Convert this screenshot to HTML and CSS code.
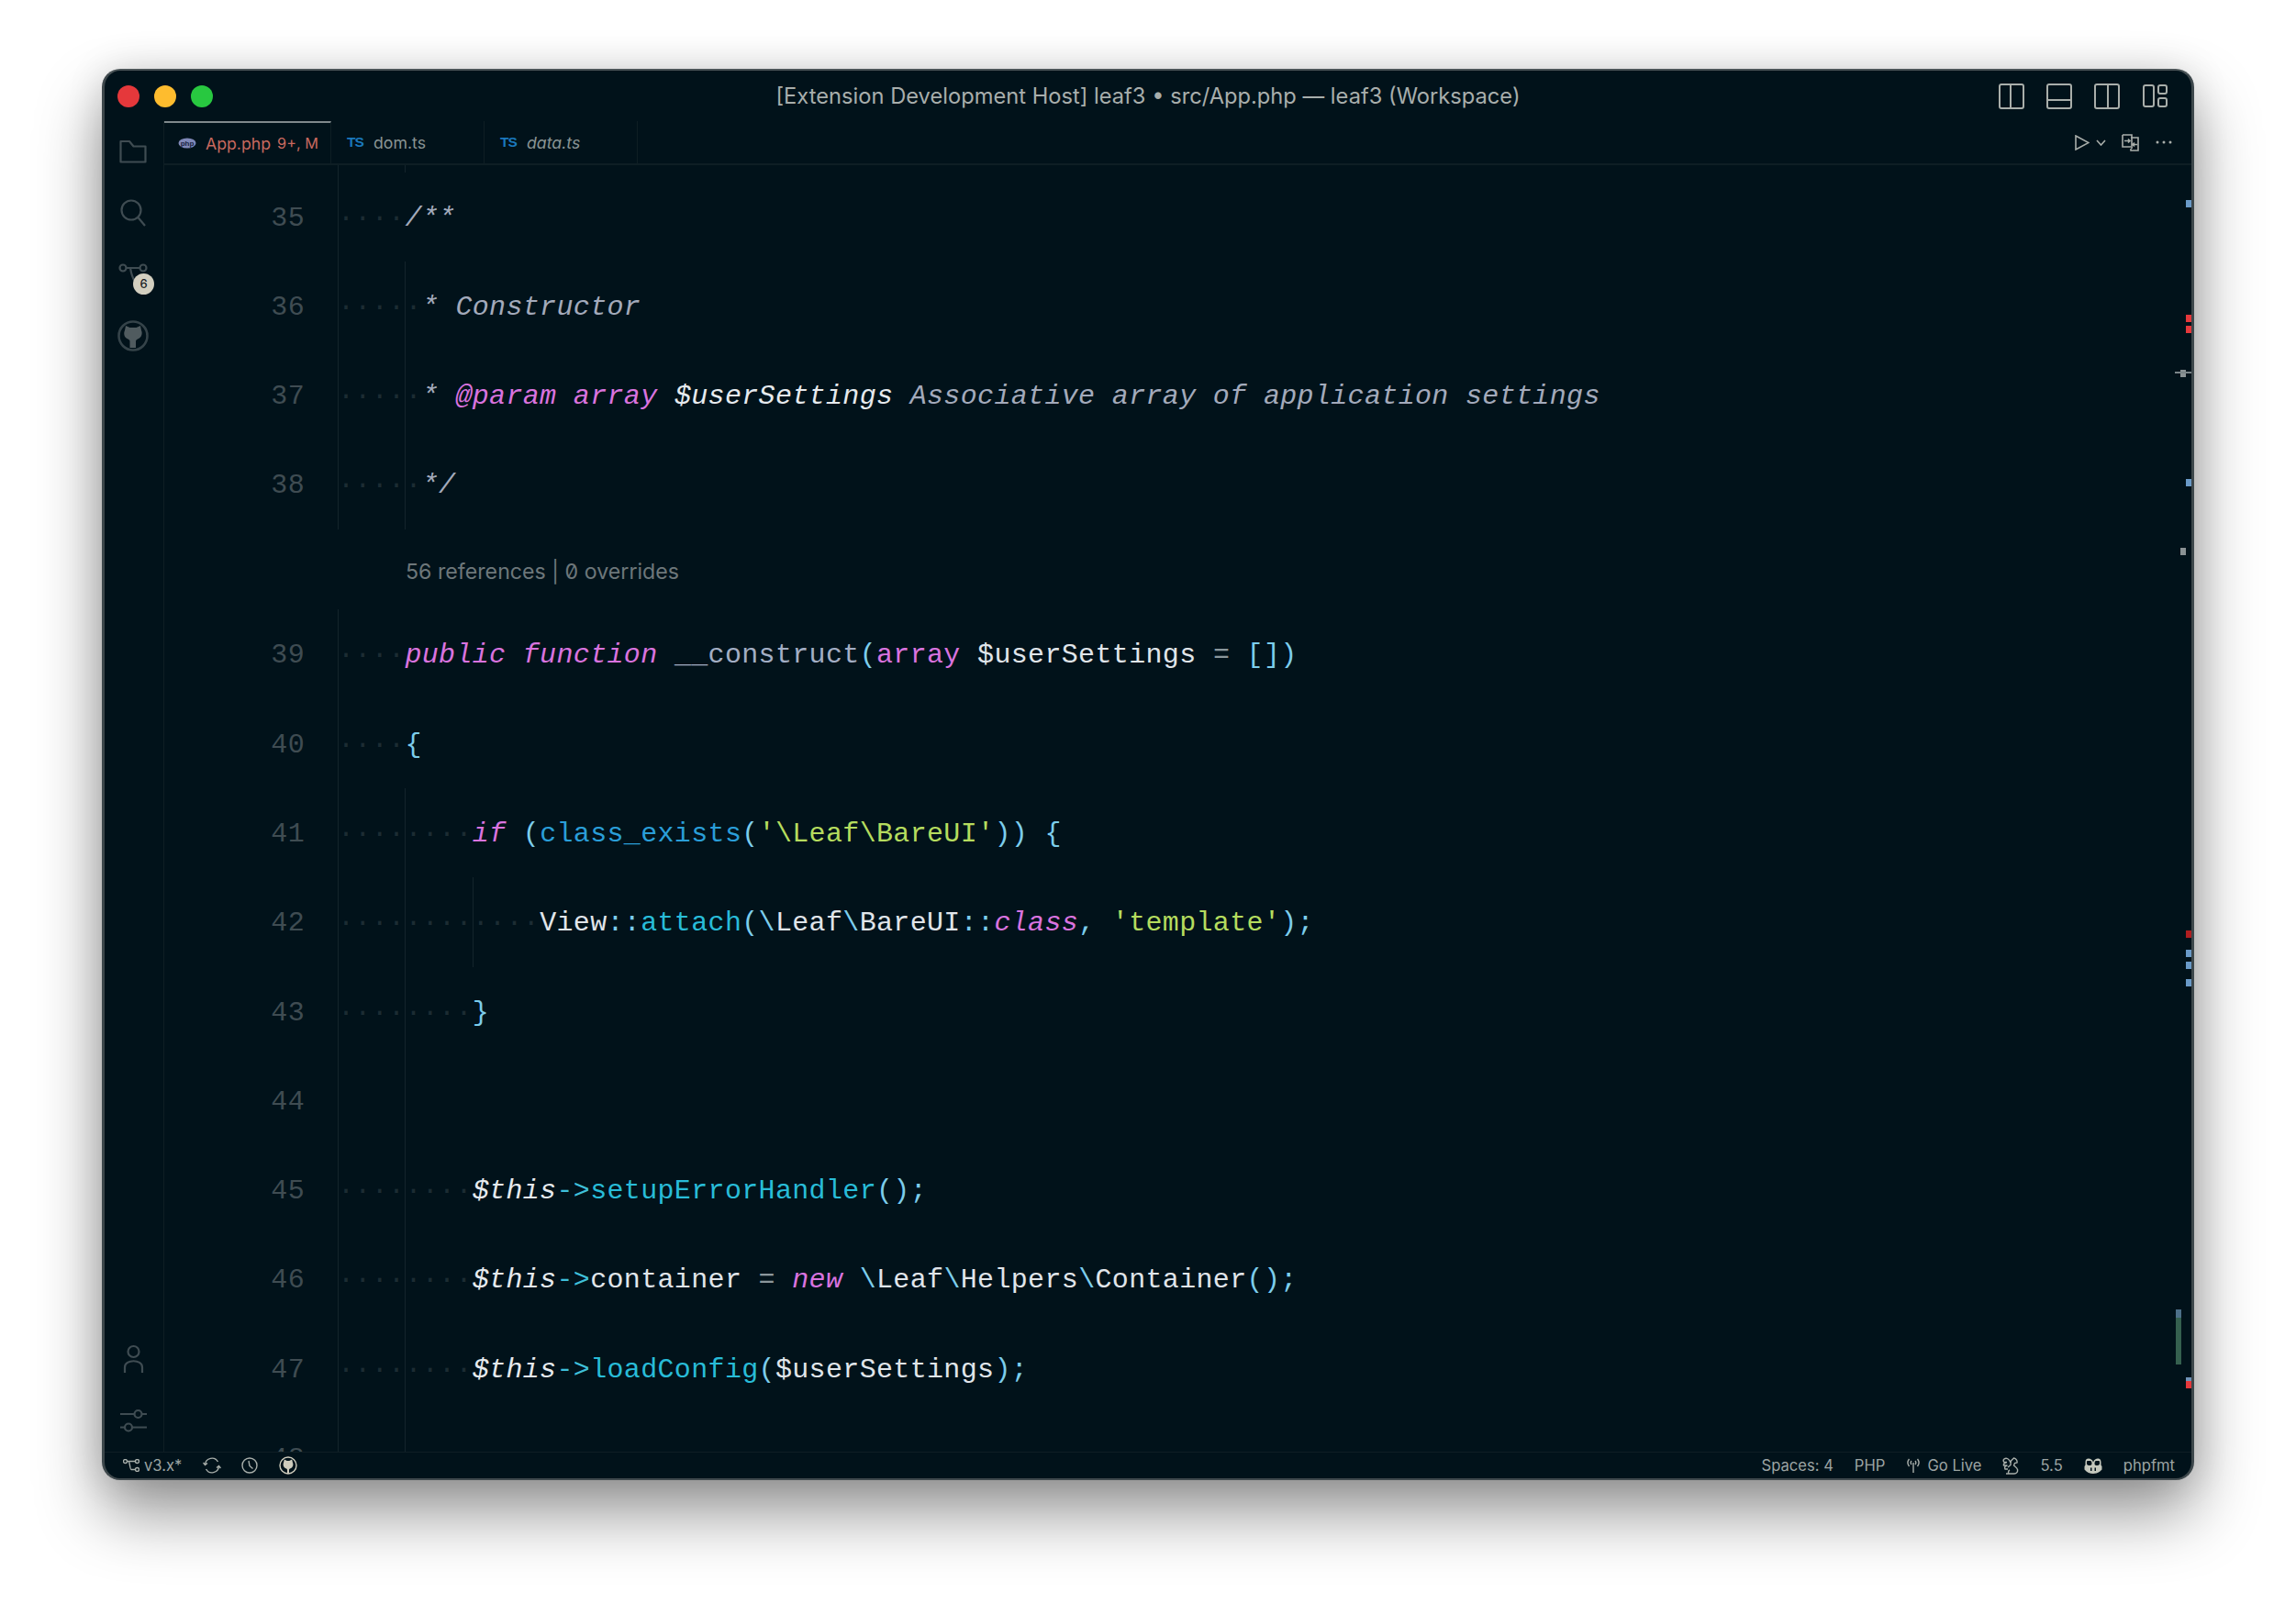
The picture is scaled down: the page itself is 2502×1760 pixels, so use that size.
FILE: index.html
```html
<!DOCTYPE html>
<html lang="en">
<head>
<meta charset="utf-8">
<title>leaf3</title>
<link rel="stylesheet" href="styles.css">
</head>
<body>
<div class="window">
  <header class="titlebar">
    <div class="lights"><span class="light red"></span><span class="light yellow"></span><span class="light green"></span></div>
    <div class="title">[Extension Development Host] leaf3 • src/App.php — leaf3 (Workspace)</div>
    <div class="layout-icons">
      <svg class="ic-layout" viewBox="0 0 28 28"><rect x="1" y="1" width="26" height="26" rx="2"/><path d="M13 1v26"/></svg>
      <svg class="ic-layout" viewBox="0 0 28 28"><rect x="1" y="1" width="26" height="26" rx="2"/><path d="M1 18h26"/></svg>
      <svg class="ic-layout" viewBox="0 0 28 28"><rect x="1" y="1" width="26" height="26" rx="2"/><path d="M15 1v26"/></svg>
      <svg class="ic-layout" viewBox="0 0 28 28"><rect x="2" y="2" width="11" height="23" rx="2"/><rect x="18" y="2" width="9" height="9" rx="2"/><rect x="18" y="16" width="9" height="9" rx="2"/></svg>
    </div>
  </header>
  <div class="main">
    <nav class="activity">
      <div class="act-group">
        <div class="act-cell"><svg class="ic-act" viewBox="114 132 64 66"><path d="M131.500 154h9.500l4.500 5.500h13v17h-27z" stroke-linejoin="round"/></svg></div>
        <div class="act-cell"><svg class="ic-act" viewBox="114 198 64 66"><circle cx="143" cy="229" r="10.5"/><path d="M150.500 237l7.500 9"/></svg></div>
        <div class="act-cell sc"><svg class="ic-act" viewBox="114 264 64 66"><circle cx="134" cy="292" r="3.500"/><circle cx="156" cy="292" r="3.500"/><path d="M137.500 292h15M142 292c1 6 2 11 5 14"/></svg><span class="badge">6</span></div>
        <div class="act-cell"><svg class="ic-act" viewBox="114 330 64 66"><circle class="ring" cx="145" cy="366" r="15.500"/><path class="cat" d="M136 360l1-5 4.500 2h7l4.500-2 1 5c1.500 3 .5 8-4 9.500-1 .5-2 1-2 2.500v7h-6.500v-7c0-1.500-1-2-2-2.500-4.500-1.500-5-6.500-3.500-9.500z"/></svg></div>
      </div>
      <div class="act-group">
        <div class="act-cell"><svg class="ic-act" viewBox="114 1450 64 66"><circle cx="145.500" cy="1473" r="6"/><path d="M136 1496v-6c0-9 19-9 19 0v6"/></svg></div>
        <div class="act-cell"><svg class="ic-act" viewBox="114 1516 64 66"><circle cx="150.500" cy="1541" r="4"/><circle cx="140" cy="1555.500" r="4"/><path d="M131 1541h15.500M154.500 1541h5.500M131 1555.500h5M144 1555.500h16"/></svg></div>
      </div>
    </nav>
    <div class="content">
      <div class="tabs">
        <div class="tab active"><svg class="ic-php" viewBox="0 0 20 12"><ellipse cx="10" cy="6" rx="9.500" ry="5.500"/><text x="10" y="8.500" text-anchor="middle">php</text></svg><span class="tab-name err">App.php</span><span class="tab-meta err">9+, M</span></div>
        <div class="tab wide"><span class="ts">TS</span><span class="tab-name">dom.ts</span></div>
        <div class="tab wide"><span class="ts">TS</span><span class="tab-name it">data.ts</span></div>
        <div class="tab-actions">
          <svg class="ic-tab play" viewBox="0 0 16 17"><path d="M1 1l14 7.500L1 16z"/></svg>
          <svg class="ic-tab chev" viewBox="0 0 11 7"><path d="M1 1l4.500 5L10 1"/></svg>
          <svg class="ic-tab split" viewBox="0 0 20 20"><path d="M1 2h10v15M1 2v13h9M10 5h8v14h-8v-2M3 8.500h6M7 6.500l2 2-2 2M17 12.500h-5M14 10.500l-2 2 2 2"/></svg>
          <svg class="ic-tab more" viewBox="0 0 18 4"><circle cx="2" cy="2" r="1.500"/><circle cx="9" cy="2" r="1.500"/><circle cx="16" cy="2" r="1.500"/></svg>
        </div>
      </div>
      <div class="editor">
        <div class="row partial"><span class="num"></span><span class="ind g">&nbsp;&nbsp;&nbsp;&nbsp;</span><span class="ind g">&nbsp;</span></div>
        <div class="row"><span class="num">35</span><span class="ind g">····</span><span class="code c">/**</span></div>
        <div class="row"><span class="num">36</span><span class="ind g">····</span><span class="ind g">·</span><span class="code c">* Constructor</span></div>
        <div class="row"><span class="num">37</span><span class="ind g">····</span><span class="ind g">·</span><span class="code c">* <span class="k">@param</span> <span class="k">array</span> <span class="t">$userSettings</span> Associative array of application settings</span></div>
        <div class="row"><span class="num">38</span><span class="ind g">····</span><span class="ind g">·</span><span class="code c">*/</span></div>
        <div class="lens">56 references | 0 overrides</div>
        <div class="row"><span class="num">39</span><span class="ind g">····</span><span class="code"><span class="k">public</span> <span class="k">function</span> <span class="m">__construct</span><span class="p">(</span><span class="k2">array</span> <span class="w">$userSettings</span> <span class="o">=</span> <span class="p">[])</span></span></div>
        <div class="row"><span class="num">40</span><span class="ind g">····</span><span class="code p">{</span></div>
        <div class="row"><span class="num">41</span><span class="ind g">····</span><span class="ind g">····</span><span class="code"><span class="k">if</span> <span class="p">(</span><span class="fb">class_exists</span><span class="p">(</span><span class="s">'\Leaf\BareUI'</span><span class="p">)) {</span></span></div>
        <div class="row"><span class="num">42</span><span class="ind g">····</span><span class="ind g">····</span><span class="ind g">····</span><span class="code"><span class="w">View</span><span class="p">::</span><span class="f">attach</span><span class="p">(\</span><span class="w">Leaf</span><span class="p">\</span><span class="w">BareUI</span><span class="p">::</span><span class="k">class</span><span class="p">,</span> <span class="s">'template'</span><span class="p">);</span></span></div>
        <div class="row"><span class="num">43</span><span class="ind g">····</span><span class="ind g">····</span><span class="code p">}</span></div>
        <div class="row"><span class="num">44</span><span class="ind g">&nbsp;&nbsp;&nbsp;&nbsp;</span><span class="ind g">&nbsp;&nbsp;&nbsp;&nbsp;</span></div>
        <div class="row"><span class="num">45</span><span class="ind g">····</span><span class="ind g">····</span><span class="code"><span class="t">$this</span><span class="a">-&gt;</span><span class="f">setupErrorHandler</span><span class="p">();</span></span></div>
        <div class="row"><span class="num">46</span><span class="ind g">····</span><span class="ind g">····</span><span class="code"><span class="t">$this</span><span class="a">-&gt;</span><span class="w">container</span> <span class="o">=</span> <span class="k">new</span> <span class="p">\</span><span class="w">Leaf</span><span class="p">\</span><span class="w">Helpers</span><span class="p">\</span><span class="w">Container</span><span class="p">();</span></span></div>
        <div class="row"><span class="num">47</span><span class="ind g">····</span><span class="ind g">····</span><span class="code"><span class="t">$this</span><span class="a">-&gt;</span><span class="f">loadConfig</span><span class="p">(</span><span class="w">$userSettings</span><span class="p">);</span></span></div>
        <div class="row"><span class="num">48</span><span class="ind g">&nbsp;&nbsp;&nbsp;&nbsp;</span><span class="ind g">&nbsp;&nbsp;&nbsp;&nbsp;</span></div>
      </div>
    </div>
  </div>
  <footer class="status">
    <div class="st-group left">
      <span class="st-item"><svg class="ic-st branch" viewBox="0 0 18 14"><circle cx="2.500" cy="2.500" r="2"/><circle cx="15.500" cy="2.500" r="2"/><circle cx="15.500" cy="11.500" r="2"/><path d="M4.500 2.500h9M6 2.500c1.500 0 1.500 9 3 9h4.500"/></svg>v3.x*</span>
      <svg class="ic-st sync" viewBox="0 0 20 20"><path d="M2.500 9a7.500 7.500 0 0 1 14-3M17.500 11a7.500 7.500 0 0 1-14 3M.5 7l2 2.500L5 7.500M19.500 13l-2-2.500L15 12.500"/></svg>
      <svg class="ic-st clock" viewBox="0 0 18 18"><circle cx="9" cy="9" r="8"/><path d="M8 4l1 5.500 3.500 3"/></svg>
      <svg class="ic-st gh" viewBox="0 0 20 20"><circle cx="10" cy="10" r="9"/><path class="cat" d="M5 7l.8-3.500 3 1.500h2.400l3-1.500L15 7c1 2.500 0 5.500-3 6.500-.7.3-1 .8-1 1.500v4H9v-4c0-.7-.3-1.200-1-1.500-3-1-4-4-3-6.500z"/></svg>
    </div>
    <div class="st-group right">
      <span>Spaces: 4</span>
      <span>PHP</span>
      <span class="st-item live"><svg class="ic-st radio" viewBox="0 0 16 16"><path d="M8 5v11M3.500 1C1.500 3.500 1.500 6.500 3.500 9M12.500 1c2 2.500 2 5.500 0 8M6 3C5 4.200 5 5.800 6 7M10 3c1 1.200 1 2.800 0 4"/></svg>Go Live</span>
      <svg class="ic-st squirrel" viewBox="0 0 18 20"><path d="M4 19h9c2.500 0 4-2 3.500-4.500-.3-2-2.500-3-4-4.500l1-2.500 2.500-.500c.5-2-1-4.500-3.500-5l-3 3c-.5 1.500-.5 3-.5 4.500L6 12M9 7C7.500 3 4.500 1 2 3c-1 1-1 2.500 0 3.500h3M5 6.500C3 7 1 8 1.500 10h4M5.500 10C3 10.500 2 12 3 14h3M8 19c-2 0-2-3 0-4"/></svg>
      <span>5.5</span>
      <svg class="ic-st copilot" viewBox="0 0 20 17"><path class="fill" d="M10 4.500C9 1.500 7 .5 5 .5 2.500.5 1.500 2 1.500 4.500v3L.5 9v3.500C3 15.500 6.500 17 10 17s7-1.500 9.500-4.500V9l-1-1.500v-3c0-2.500-1-4-3.500-4-2 0-4 1-5 4zM4 3h3c1 0 1.500 1.500 1.500 3S7.500 8 6 8 3 7.500 3 6V4c0-.5.500-1 1-1zm9 0h3c.5 0 1 .5 1 1v2c0 1.500-1.500 2-3 2s-2.500-.5-2.500-2 .5-3 1.500-3zM7 10.500h1.500V14H7zm4.500 0H13V14h-1.500z" fill-rule="evenodd"/></svg>
      <span>phpfmt</span>
    </div>
  </footer>
  <div class="ruler">
    <i class="mk lane-r blue y1"></i><i class="mk lane-r red y2"></i><i class="mk lane-r red y3"></i>
    <i class="mk lane-c gray y4"></i><i class="cursor"></i>
    <i class="mk lane-r blue y5"></i><i class="mk lane-c gray y6"></i>
    <i class="mk lane-r dred y7"></i><i class="mk lane-r blue y8"></i><i class="mk lane-r blue y9"></i><i class="mk lane-r blue y10"></i>
    <i class="gitbar"></i><i class="gitcap"></i>
    <i class="mk lane-r blue y11"></i><i class="mk lane-r red y12"></i>
  </div>
</div>
</body>
</html>
```
FILE: styles.css
```css
* { box-sizing: border-box; }
html, body { margin: 0; height: 100%; background: #fff; }
body { padding-top: 75px; overflow: hidden; }

.window {
  --bg: #01121a;
  --line: #0e1e24;
  position: relative;
  display: flex;
  flex-direction: column;
  width: 2280px;
  height: 1538px;
  margin: 0 auto;
  background: var(--bg);
  border: 3px solid #3d474b;
  border-top: 2px solid #4b5457;
  border-bottom: 2px solid #40494d;
  border-radius: 20px;
  box-shadow: 0 36px 70px rgba(0, 0, 0, .42), 0 0 40px rgba(0, 0, 0, .12);
  font-family: Inter, "Noto Sans", sans-serif;
}

/* Title bar */
.titlebar {
  display: grid;
  grid-template-columns: 1fr auto 1fr;
  align-items: center;
  height: 55px;
  flex: none;
}
.lights { display: flex; gap: 16px; padding-left: 14px; }
.light { width: 24px; height: 24px; border-radius: 50%; }
.red { background: #ff5f57; }
.yellow { background: #febc2e; }
.green { background: #28c840; }
.title { font-size: 23.7px; color: #a8aeac; white-space: nowrap; }
.layout-icons { display: flex; justify-content: flex-end; gap: 24px; padding-right: 26px; }
.ic-layout { width: 28px; height: 28px; fill: none; stroke: #a9aeaa; stroke-width: 2; }

/* Main area */
.main { display: flex; flex: 1; min-height: 0; }
.activity {
  display: flex;
  flex-direction: column;
  justify-content: space-between;
  flex: none;
  width: 65px;
  border-right: 1px solid var(--line);
}
.act-cell { position: relative; height: 66px; }
.ic-act { display: block; width: 64px; height: 66px; fill: none; stroke: #3f4c52; stroke-width: 2.2; }
.ic-act .cat { fill: #505b5f; stroke: none; }
.ic-act .ring { stroke: #354349; stroke-width: 2.6; }
.badge {
  position: absolute;
  left: 31px;
  top: 34px;
  width: 23px;
  height: 23px;
  border-radius: 50%;
  background: #d3cfc0;
  color: #1a2226;
  font-size: 13px;
  font-weight: 500;
  line-height: 23px;
  text-align: center;
}

.content { display: flex; flex-direction: column; flex: 1; min-width: 0; }

/* Tabs */
.tabs {
  display: flex;
  align-items: stretch;
  flex: none;
  height: 48px;
  border-bottom: 2px solid var(--line);
  font-size: 17.7px;
  color: #8a9494;
}
.tab {
  display: flex;
  align-items: center;
  width: 182px;
  padding-left: 15px;
  border-right: 1px solid var(--line);
}
.tab.active { border-top: 2px solid #7f898c; }
.tab.wide { width: 167px; padding-left: 17px; }
.ic-php { width: 20px; height: 12px; margin-right: 10px; }
.ic-php ellipse { fill: #7f88b8; }
.ic-php text { font: 700 8px "Liberation Sans", sans-serif; fill: #1a2340; }
.err { color: #c8695f; }
.tab-meta { margin-left: 7px; font-size: 16.3px; }
.ts { width: 29px; color: #1a78bd; font: 700 15.5px "Liberation Sans", sans-serif; letter-spacing: -1px; }
.it { font-style: italic; }
.tab-actions { display: flex; align-items: center; flex: 1; justify-content: flex-end; padding-right: 21px; }
.ic-tab { fill: none; stroke: #a9aeaa; stroke-width: 1.6; }
.play { width: 16px; height: 17px; margin-right: 7px; }
.chev { width: 11px; height: 7px; margin-right: 17px; }
.split { width: 20px; height: 20px; margin-right: 17px; }
.more { width: 18px; height: 4px; fill: #a9aeaa; stroke: none; }

/* Editor */
.editor {
  flex: 1;
  min-height: 0;
  overflow: hidden;
  font-family: "Liberation Mono", monospace;
  font-size: 30px;
  letter-spacing: .34px;
  color: #dfe5ea;
}
.row { display: flex; height: 97.3px; line-height: 100.5px; white-space: pre; }
.row.partial { height: 7.6px; overflow: hidden; }
.num { flex: none; width: 189px; padding-right: 36px; text-align: right; color: #3f4c52; }
.ind { flex: none; color: #1c2c33; }
.g { box-shadow: inset 1px 0 0 #14242b; }
.code { white-space: pre; }
.lens {
  height: 87.6px;
  padding-left: 263px;
  font-family: Inter, "Noto Sans", sans-serif;
  font-size: 23.2px;
  letter-spacing: 0;
  line-height: 92px;
  color: #6d777a;
  font-variant-numeric: slashed-zero;
}
.c { color: #a3aabb; font-style: italic; }
.k { color: #d973df; font-style: italic; }
.k2 { color: #d973df; font-style: normal; }
.w { color: #e0e5ea; font-style: normal; }
.t { color: #e6eaee; font-style: italic; }
.m { color: #a3aec4; }
.p { color: #7ccdec; font-style: normal; }
.a { color: #3fc0da; }
.o { color: #8b979c; }
.f { color: #28bcd8; }
.fb { color: #2a9ed8; }
.s { color: #b5dc5e; }

/* Status bar */
.status {
  display: flex;
  justify-content: space-between;
  align-items: center;
  flex: none;
  height: 29px;
  padding: 0 18px 0 20px;
  border-top: 1px solid var(--line);
  font-size: 16.6px;
  color: #9ca4a3;
}
.st-group { display: flex; align-items: center; }
.st-item { display: flex; align-items: center; }
.left { gap: 22.5px; }
.right { gap: 23px; }
.ic-st { flex: none; fill: none; stroke: #a8aeaa; stroke-width: 1.4; }
.branch { width: 18px; height: 14px; margin-right: 5px; }
.sync { width: 20px; height: 20px; }
.clock { width: 18px; height: 18px; }
.gh { width: 20px; height: 20px; stroke: #cfccbd; }
.gh .cat { fill: #cfccbd; stroke: none; }
.radio { width: 16px; height: 16px; margin-right: 7px; }
.squirrel { width: 18px; height: 20px; }
.copilot { width: 20px; height: 17px; stroke: none; }
.copilot .fill { fill: #c5c8bd; }

/* Overview ruler */
.ruler { position: absolute; top: 0; right: 0; bottom: 0; width: 20px; }
.mk { position: absolute; height: 8px; width: 6px; }
.lane-r { right: 0; }
.lane-c { right: 6px; }
.blue { background: #6a9ac8; }
.red { background: #e5383b; }
.dred { background: #b01e20; }
.gray { background: #8a9294; }
.y1 { top: 141px; }
.y2 { top: 266px; }
.y3 { top: 278px; }
.y4 { top: 326px; }
.y5 { top: 445px; }
.y6 { top: 520px; }
.y7 { top: 937px; }
.y8 { top: 958px; }
.y9 { top: 971px; }
.y10 { top: 990px; }
.y11 { top: 1424px; height: 4px; background: #6f93b8; }
.y12 { top: 1428px; }
.cursor { position: absolute; right: 0; top: 328px; width: 18px; height: 2px; background: #7b8588; }
.gitbar { position: absolute; right: 11px; top: 1350px; width: 6px; height: 60px; background: #35604f; }
.gitcap { position: absolute; right: 11px; top: 1350px; width: 6px; height: 9px; background: #4d7089; }
```
